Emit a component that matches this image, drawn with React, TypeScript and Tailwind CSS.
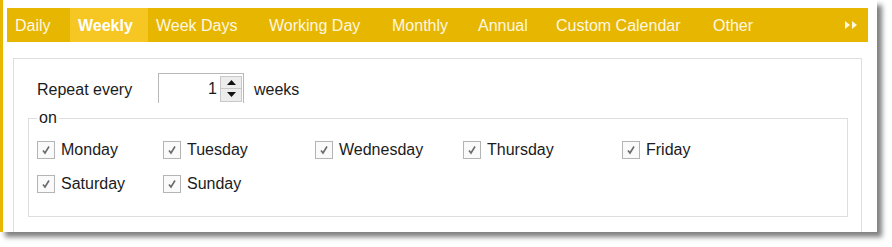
import React from 'react';

const TABS = [
  { label: 'Daily', w: 'w-[63px]' },
  { label: 'Weekly', w: 'w-[78px]', active: true },
  { label: 'Week Days', w: 'w-[113px]' },
  { label: 'Working Day', w: 'w-[123px]' },
  { label: 'Monthly', w: 'w-[86px]' },
  { label: 'Annual', w: 'w-[78px]' },
  { label: 'Custom Calendar', w: 'w-[157px]' },
  { label: 'Other', w: 'w-[90px]' },
];

const ROW1 = ['Monday', 'Tuesday', 'Wednesday', 'Thursday', 'Friday'];
const ROW2 = ['Saturday', 'Sunday'];

function Check({ label }: { label: string }) {
  return (
    <label className="flex items-center gap-[6px] h-[34px]">
      <span className="w-[18px] h-[18px] border border-[#b4b4b4] bg-[#fafafa] flex items-center justify-center">
        <svg width="10" height="10" viewBox="0 0 10 10">
          <path d="M2 5.5 L4 8 L8 1.5" fill="none" stroke="#6b6b6b" strokeWidth="1.6" />
        </svg>
      </span>
      <span>{label}</span>
    </label>
  );
}

export default function App() {
  return (
    <div className="w-[892px] h-[247px] bg-white font-['Liberation_Sans',Arial,sans-serif] text-[16px] text-[#1b1b22]">
      <div className="w-[877px] h-[232px] bg-white border-l-[3px] border-[#e8b800] pt-[8px] pl-[4px] pr-[9px] flex flex-col shadow-[5px_5px_5px_rgba(0,0,0,0.5)]">
        {/* Tabs */}
        <div className="h-[34px] bg-[#e6b600] flex text-[#fff8e1] shrink-0">
          {TABS.map(t => (
            <div
              key={t.label}
              className={`${t.w} pl-[8px] pt-[1px] flex items-center ${t.active ? 'bg-[#f6c623] font-bold text-white' : ''}`}
            >
              {t.label}
            </div>
          ))}
          <div className="flex-1 flex items-center justify-end pr-[10px]">
            <svg width="14" height="10" viewBox="0 0 14 10">
              <path d="M1 1 L6 5 L1 9 Z M8 1 L13 5 L8 9 Z" fill="#fff8e1" />
            </svg>
          </div>
        </div>

        {/* Panel */}
        <div className="mt-[16px] mx-[6px] flex-1 border-l border-r border-t border-[#dedede] pt-[14px] pl-[23px] pr-[13px]">
          <div className="flex items-center h-[30px]">
            <span className="w-[121px] pt-[3px]">Repeat every</span>
            <div className="w-[86px] h-[30px] border-l border-t border-r border-[#b8b8b8] flex items-center justify-end pr-[1px]">
              <span className="mr-[3px]">1</span>
              <div className="flex flex-col w-[22px] h-[26px] border border-[#c8c8c8] bg-[#ececec]">
                <div className="flex-1 flex items-center justify-center border-b border-[#c8c8c8]">
                  <svg width="9" height="5" viewBox="0 0 9 5"><path d="M0 5 L4.5 0 L9 5 Z" fill="#111" /></svg>
                </div>
                <div className="flex-1 flex items-center justify-center">
                  <svg width="9" height="5" viewBox="0 0 9 5"><path d="M0 0 L4.5 5 L9 0 Z" fill="#111" /></svg>
                </div>
              </div>
            </div>
            <span className="ml-[10px] pt-[3px]">weeks</span>
          </div>

          <fieldset className="mt-[6px] -ml-[9px] border border-[#dedede] pl-[8px] pt-[6px] pb-[15px]">
            <legend className="px-[2px] leading-[18px]">on</legend>
            <div className="grid grid-cols-[126px_152px_148px_159px_auto]">
              {ROW1.map(d => <Check key={d} label={d} />)}
              {ROW2.map(d => <Check key={d} label={d} />)}
            </div>
          </fieldset>
        </div>
      </div>
    </div>
  );
}
